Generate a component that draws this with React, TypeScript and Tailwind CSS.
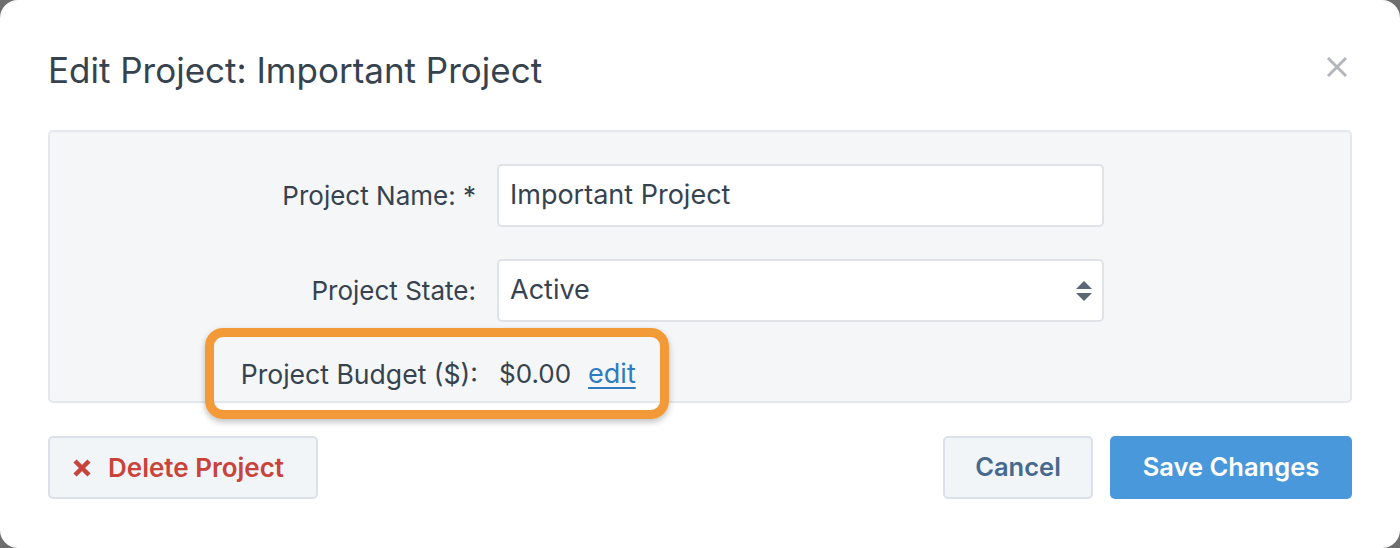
import React from 'react'

const font = { fontFamily: 'Inter, "Noto Sans", sans-serif' }

function CloseIcon() {
  return (
    <svg width="22" height="22" viewBox="0 0 22 22" className="block">
      <path d="M2 2 L20 20 M20 2 L2 20" stroke="#b3b7bd" strokeWidth="3" />
    </svg>
  )
}

function CrossIcon() {
  return (
    <svg width="20" height="20" viewBox="0 0 20 20" className="block">
      <path d="M3 3 L17 17 M17 3 L3 17" stroke="#c9433a" strokeWidth="4.5" />
    </svg>
  )
}

function SelectArrows() {
  return (
    <svg width="16" height="20" viewBox="0 0 16 20" className="block">
      <path d="M8 0 L16 8 H0 Z" fill="#5c6674" />
      <path d="M0 12 H16 L8 20 Z" fill="#5c6674" />
    </svg>
  )
}

export default function App() {
  return (
    <div className="h-[548px] w-[1400px] bg-[#6e6e6e]" style={font}>
      <div className="relative flex h-full flex-col rounded-[18px] bg-white px-[48px]">
        <div className="flex items-center justify-between pt-[48px]">
          <h1 className="text-[35px] leading-[44px] font-normal text-[#36434f]">
            Edit Project: Important Project
          </h1>
          <button className="mr-[4px] -mt-[6px]">
            <CloseIcon />
          </button>
        </div>

        <div className="mt-[38px] flex h-[273px] flex-col gap-[32px] rounded-[5px] border-2 border-[#e4e7eb] bg-[#f5f6f8] pt-[32px]">
          <div className="flex items-center">
            <label className="w-[426px] text-right text-[26px] leading-[32px] text-[#36434f]">
              Project Name: *
            </label>
            <div className="ml-[21px] flex h-[63px] w-[607px] items-center rounded-[5px] border-2 border-[#dfe2e6] bg-white px-[11px] text-[27px] text-[#36434f]">
              Important Project
            </div>
          </div>

          <div className="flex items-center">
            <label className="w-[426px] text-right text-[26px] leading-[32px] text-[#36434f]">
              Project State:
            </label>
            <div className="ml-[21px] flex h-[63px] w-[607px] items-center justify-between rounded-[5px] border-2 border-[#dfe2e6] bg-white pr-[10px] pl-[11px] text-[27px] text-[#36434f]">
              <span>Active</span>
              <SelectArrows />
            </div>
          </div>

          <div className="flex h-[40px] items-center">
            <label className="w-[428px] text-right text-[26.6px] leading-[32px] text-[#36434f]">
              Project Budget ($):
            </label>
            <div className="ml-[21px] flex items-center gap-[17px] text-[26px] leading-[32px] text-[#36434f]">
              <span>$0.00</span>
              <a className="cursor-pointer text-[27px] text-[#2f7bbf] underline underline-offset-[4px]">edit</a>
            </div>
          </div>
        </div>

        <div className="mt-[33px] flex items-center justify-between">
          <button className="flex h-[63px] w-[270px] items-center gap-[16px] rounded-[5px] border-2 border-[#dbe1e8] bg-[#f2f5f8] pl-[22px] text-[26px] font-semibold text-[#c9433a]">
            <CrossIcon />
            Delete Project
          </button>
          <div className="flex items-center gap-[17px]">
            <button className="h-[63px] w-[150px] rounded-[5px] border-2 border-[#dbe1e8] bg-[#f2f5f8] text-[25.5px] font-semibold text-[#47698d]">
              Cancel
            </button>
            <button className="h-[63px] w-[242px] rounded-[5px] bg-[#4a98dc] text-[25.5px] font-semibold text-white">
              Save Changes
            </button>
          </div>
        </div>

        <div className="pointer-events-none absolute top-[328px] left-[205px] h-[91px] w-[464px] rounded-[18px] border-[9px] border-[#f29a38] shadow-[0_3px_6px_rgba(0,0,0,0.25)]" />
      </div>
    </div>
  )
}
